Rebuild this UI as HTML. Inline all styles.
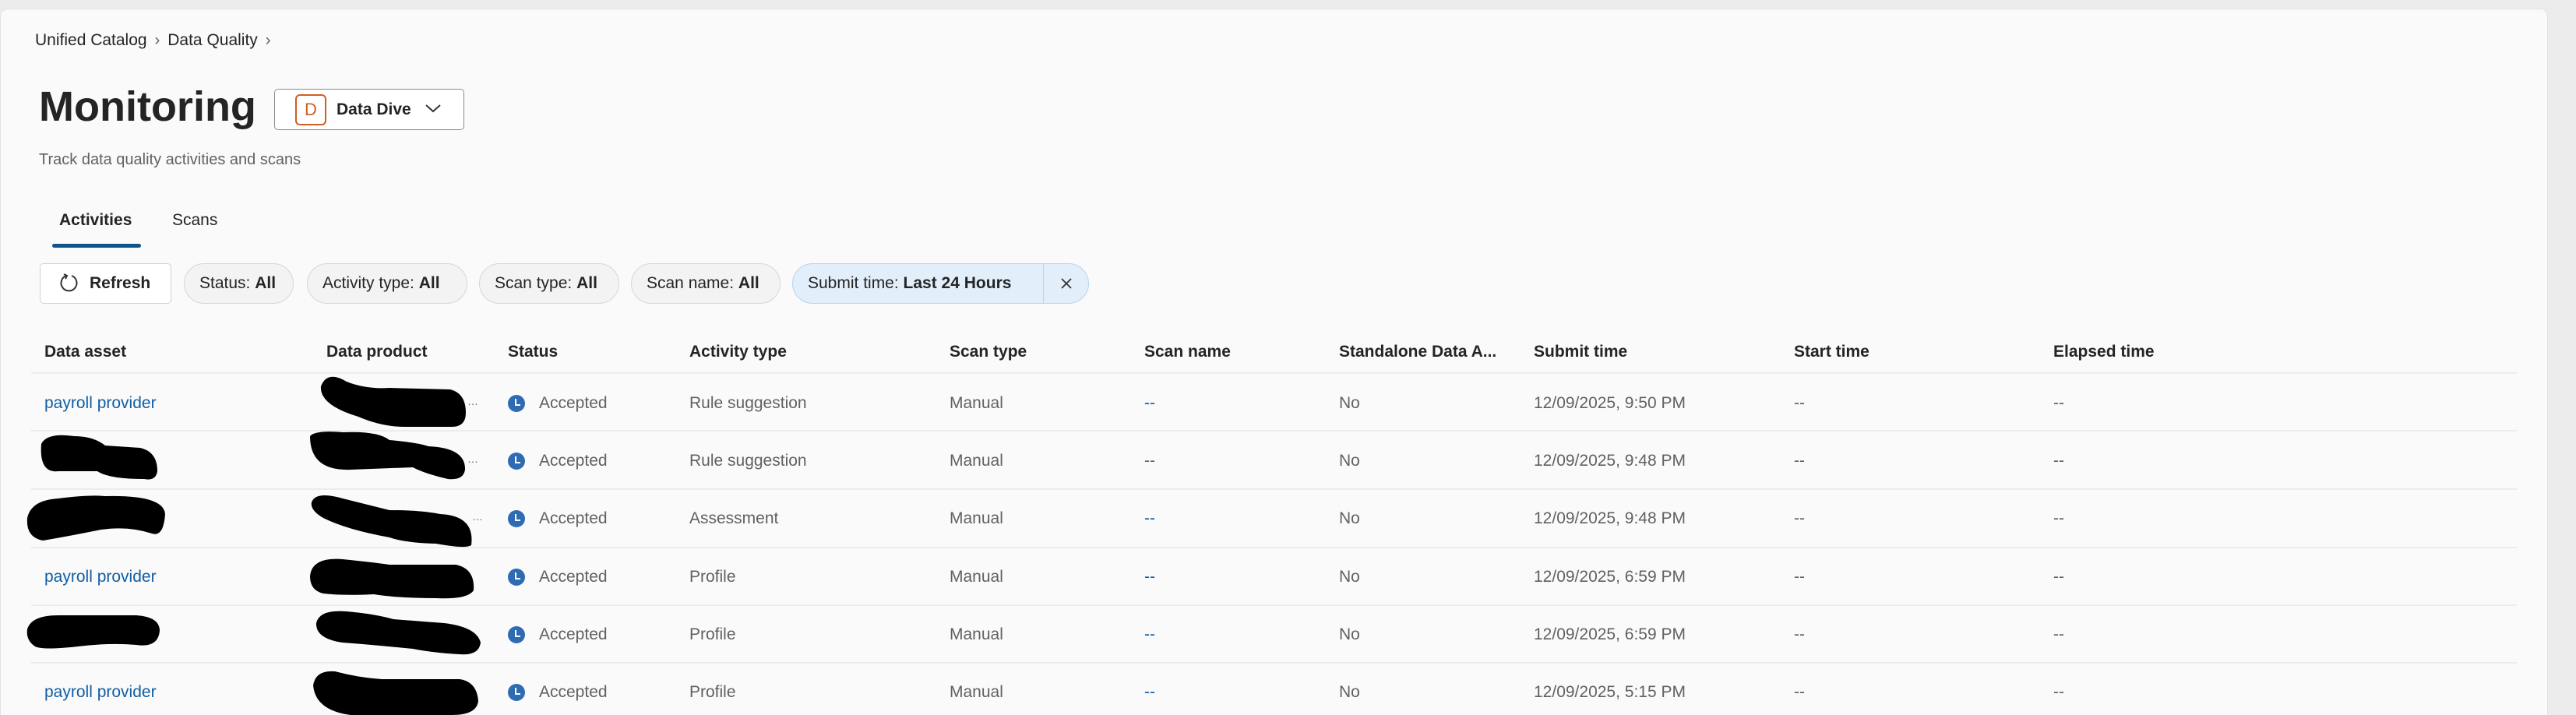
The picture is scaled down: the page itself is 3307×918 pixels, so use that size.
<!DOCTYPE html>
<html style="overflow:hidden;height:918px"><head><meta charset="utf-8"><style>
*{margin:0;padding:0;box-sizing:border-box}
body{width:3307px;height:918px;background:#ececec;font-family:"Segoe UI","Liberation Sans",sans-serif;color:#242424;position:relative;overflow:hidden}
.card{position:absolute;left:0;top:11px;width:3271px;height:907px;background:#fafafa;border-radius:10px 10px 0 0;border:1px solid #e3e3e3;border-bottom:none}
.a{position:absolute;white-space:nowrap}
.pill{position:absolute;top:338px;height:52px;border:1px solid #d6d6d6;border-radius:26px;background:#f3f3f3;font-size:21px;line-height:50px;padding-left:19px}
.pill b{font-weight:600}
.h{position:absolute;top:440px;font-size:21px;font-weight:600;color:#242424}
.c{position:absolute;font-size:21px;color:#616161;line-height:26px}
.lk{color:#115ea3}
.line{position:absolute;left:40px;width:3191px;height:2px;background:#ececec}
.ic{position:absolute;width:22px;height:22px;border-radius:50%;background:#2f6bb3}
.ic:after{content:"";position:absolute;left:9px;top:5px;width:5px;height:7px;border-left:2px solid #fff;border-bottom:2px solid #fff}
</style></head><body>
<div class="card"></div>
<div class="a" style="left:45px;top:40px;font-size:21px">Unified Catalog <span style="color:#666;margin:0 4px">›</span> Data Quality <span style="color:#666;margin-left:4px">›</span></div>
<div class="a" style="left:50px;top:106px;font-size:54px;font-weight:600">Monitoring</div>
<div class="a" style="left:352px;top:114px;width:244px;height:53px;border:1px solid #8a8a8a;border-radius:5px;background:#fff"></div>
<div class="a" style="left:379px;top:121px;width:40px;height:40px;border:2px solid #d05d25;border-radius:6px;color:#d05d25;font-size:22px;text-align:center;line-height:36px">D</div>
<div class="a" style="left:432px;top:126px;font-size:21px;font-weight:600;line-height:30px">Data Dive</div>
<svg class="a" style="left:545px;top:132px" width="22" height="14"><path d="M2 3 L11 11 L20 3" stroke="#333" stroke-width="2" fill="none"/></svg>
<div class="a" style="left:50px;top:194px;font-size:20px;color:#616161">Track data quality activities and scans</div>
<div class="a" style="left:76px;top:271px;font-size:21px;font-weight:600">Activities</div>
<div class="a" style="left:221px;top:271px;font-size:21px">Scans</div>
<div class="a" style="left:67px;top:313px;width:114px;height:5px;border-radius:3px;background:#0f548c"></div>
<div class="a" style="left:51px;top:338px;width:169px;height:52px;border:1px solid #d1d1d1;border-radius:5px;background:#fff"></div>
<svg class="a" style="left:76px;top:350px" width="26" height="28"><path d="M9 4 A10 10 0 1 0 16 4" stroke="#333" stroke-width="2" fill="none"/><path d="M6 2 L10 4 L8 8" stroke="#333" stroke-width="2" fill="none"/></svg>
<div class="a" style="left:115px;top:350px;font-size:21px;font-weight:600;line-height:28px">Refresh</div>
<div class="pill" style="left:236px;width:141px">Status: <b>All</b></div>
<div class="pill" style="left:394px;width:206px">Activity type: <b>All</b></div>
<div class="pill" style="left:615px;width:180px">Scan type: <b>All</b></div>
<div class="pill" style="left:810px;width:192px">Scan name: <b>All</b></div>
<div class="pill" style="left:1017px;width:381px;background:#e3eefb;border-color:#b7d3f2">Submit time: <b>Last 24 Hours</b></div>
<div class="a" style="left:1339px;top:339px;width:1px;height:50px;background:#b7d3f2"></div>
<svg class="a" style="left:1360px;top:355px" width="18" height="18"><path d="M3 3 L15 15 M15 3 L3 15" stroke="#333" stroke-width="1.8"/></svg>

<div class="h" style="left:57px">Data asset</div>
<div class="h" style="left:419px">Data product</div>
<div class="h" style="left:652px">Status</div>
<div class="h" style="left:885px">Activity type</div>
<div class="h" style="left:1219px">Scan type</div>
<div class="h" style="left:1469px">Scan name</div>
<div class="h" style="left:1719px">Standalone Data A...</div>
<div class="h" style="left:1969px">Submit time</div>
<div class="h" style="left:2303px">Start time</div>
<div class="h" style="left:2636px">Elapsed time</div>
<div class="line" style="top:478px"></div>
<div class="line" style="top:552px"></div>
<div class="line" style="top:627px"></div>
<div class="line" style="top:702px"></div>
<div class="line" style="top:776px"></div>
<div class="line" style="top:850px"></div>

<div class="c lk" style="left:57px;top:505px">payroll provider</div>
<div class="c lk" style="left:57px;top:728px">payroll provider</div>
<div class="c lk" style="left:57px;top:876px">payroll provider</div>

<div class="ic" style="left:652px;top:507px"></div><div class="c" style="left:692px;top:505px">Accepted</div>
<div class="ic" style="left:652px;top:581px"></div><div class="c" style="left:692px;top:579px">Accepted</div>
<div class="ic" style="left:652px;top:655px"></div><div class="c" style="left:692px;top:653px">Accepted</div>
<div class="ic" style="left:652px;top:730px"></div><div class="c" style="left:692px;top:728px">Accepted</div>
<div class="ic" style="left:652px;top:804px"></div><div class="c" style="left:692px;top:802px">Accepted</div>
<div class="ic" style="left:652px;top:878px"></div><div class="c" style="left:692px;top:876px">Accepted</div>

<div class="c" style="left:885px;top:505px">Rule suggestion</div>
<div class="c" style="left:885px;top:579px">Rule suggestion</div>
<div class="c" style="left:885px;top:653px">Assessment</div>
<div class="c" style="left:885px;top:728px">Profile</div>
<div class="c" style="left:885px;top:802px">Profile</div>
<div class="c" style="left:885px;top:876px">Profile</div>

<div class="c" style="left:1219px;top:505px">Manual</div>
<div class="c" style="left:1219px;top:579px">Manual</div>
<div class="c" style="left:1219px;top:653px">Manual</div>
<div class="c" style="left:1219px;top:728px">Manual</div>
<div class="c" style="left:1219px;top:802px">Manual</div>
<div class="c" style="left:1219px;top:876px">Manual</div>

<div class="c lk" style="left:1469px;top:505px">--</div>
<div class="c" style="left:1469px;top:579px">--</div>
<div class="c lk" style="left:1469px;top:653px">--</div>
<div class="c lk" style="left:1469px;top:728px">--</div>
<div class="c lk" style="left:1469px;top:802px">--</div>
<div class="c lk" style="left:1469px;top:876px">--</div>

<div class="c" style="left:1719px;top:505px">No</div>
<div class="c" style="left:1719px;top:579px">No</div>
<div class="c" style="left:1719px;top:653px">No</div>
<div class="c" style="left:1719px;top:728px">No</div>
<div class="c" style="left:1719px;top:802px">No</div>
<div class="c" style="left:1719px;top:876px">No</div>

<div class="c" style="left:1969px;top:505px">12/09/2025, 9:50 PM</div>
<div class="c" style="left:1969px;top:579px">12/09/2025, 9:48 PM</div>
<div class="c" style="left:1969px;top:653px">12/09/2025, 9:48 PM</div>
<div class="c" style="left:1969px;top:728px">12/09/2025, 6:59 PM</div>
<div class="c" style="left:1969px;top:802px">12/09/2025, 6:59 PM</div>
<div class="c" style="left:1969px;top:876px">12/09/2025, 5:15 PM</div>

<div class="c" style="left:2303px;top:505px">--</div><div class="c" style="left:2636px;top:505px">--</div>
<div class="c" style="left:2303px;top:579px">--</div><div class="c" style="left:2636px;top:579px">--</div>
<div class="c" style="left:2303px;top:653px">--</div><div class="c" style="left:2636px;top:653px">--</div>
<div class="c" style="left:2303px;top:728px">--</div><div class="c" style="left:2636px;top:728px">--</div>
<div class="c" style="left:2303px;top:802px">--</div><div class="c" style="left:2636px;top:802px">--</div>
<div class="c" style="left:2303px;top:876px">--</div><div class="c" style="left:2636px;top:876px">--</div>

<svg class="a" style="left:0;top:0" width="700" height="918">
<g fill="#000">
<path d="M412 496 Q420 475 445 490 Q470 500 500 498 L578 500 Q598 505 598 530 Q598 548 580 548 L520 548 Q490 548 460 535 Q410 520 412 496Z"/>
<path d="M53 570 Q60 555 95 560 Q120 560 135 572 L180 575 Q202 580 202 605 Q200 618 185 615 Q140 615 125 605 L75 605 Q50 608 53 570Z"/>
<path d="M398 560 Q405 552 440 555 Q485 553 500 565 Q535 568 550 573 Q598 575 597 603 Q595 617 575 615 Q545 608 530 600 L450 603 Q398 605 398 560Z"/>
<path d="M35 665 Q40 642 75 640 Q115 635 135 637 Q210 635 212 660 Q210 690 195 685 Q165 675 130 680 Q80 690 55 694 Q33 690 35 665Z"/>
<path d="M400 645 Q405 630 440 640 Q480 650 500 655 Q540 655 565 660 Q610 662 605 700 Q598 705 560 698 Q520 697 500 690 Q445 680 415 665 Q398 655 400 645Z"/>
<path d="M398 740 Q400 715 440 718 Q480 722 500 725 L585 725 Q610 730 608 758 Q600 770 560 768 Q510 768 480 763 Q440 765 415 762 Q398 758 398 740Z"/>
<path d="M35 808 Q40 790 75 790 L175 790 Q205 792 205 810 Q203 832 175 828 Q140 825 100 830 Q55 835 45 830 Q33 822 35 808Z"/>
<path d="M406 800 Q410 782 445 785 Q480 788 505 795 Q545 798 570 800 Q612 805 617 825 Q615 842 590 840 Q555 838 530 833 Q480 828 440 825 Q405 820 406 800Z"/>
<path d="M402 880 Q405 860 430 862 Q460 870 490 872 L590 872 Q612 875 614 900 Q612 918 580 918 L450 918 Q405 912 402 880Z"/>
</g>
<text x="600" y="520" font-size="14" fill="#666" font-family="Liberation Sans">…</text>
<text x="600" y="594" font-size="14" fill="#666" font-family="Liberation Sans">…</text>
<text x="606" y="668" font-size="14" fill="#666" font-family="Liberation Sans">…</text>
</svg>
</body></html>
